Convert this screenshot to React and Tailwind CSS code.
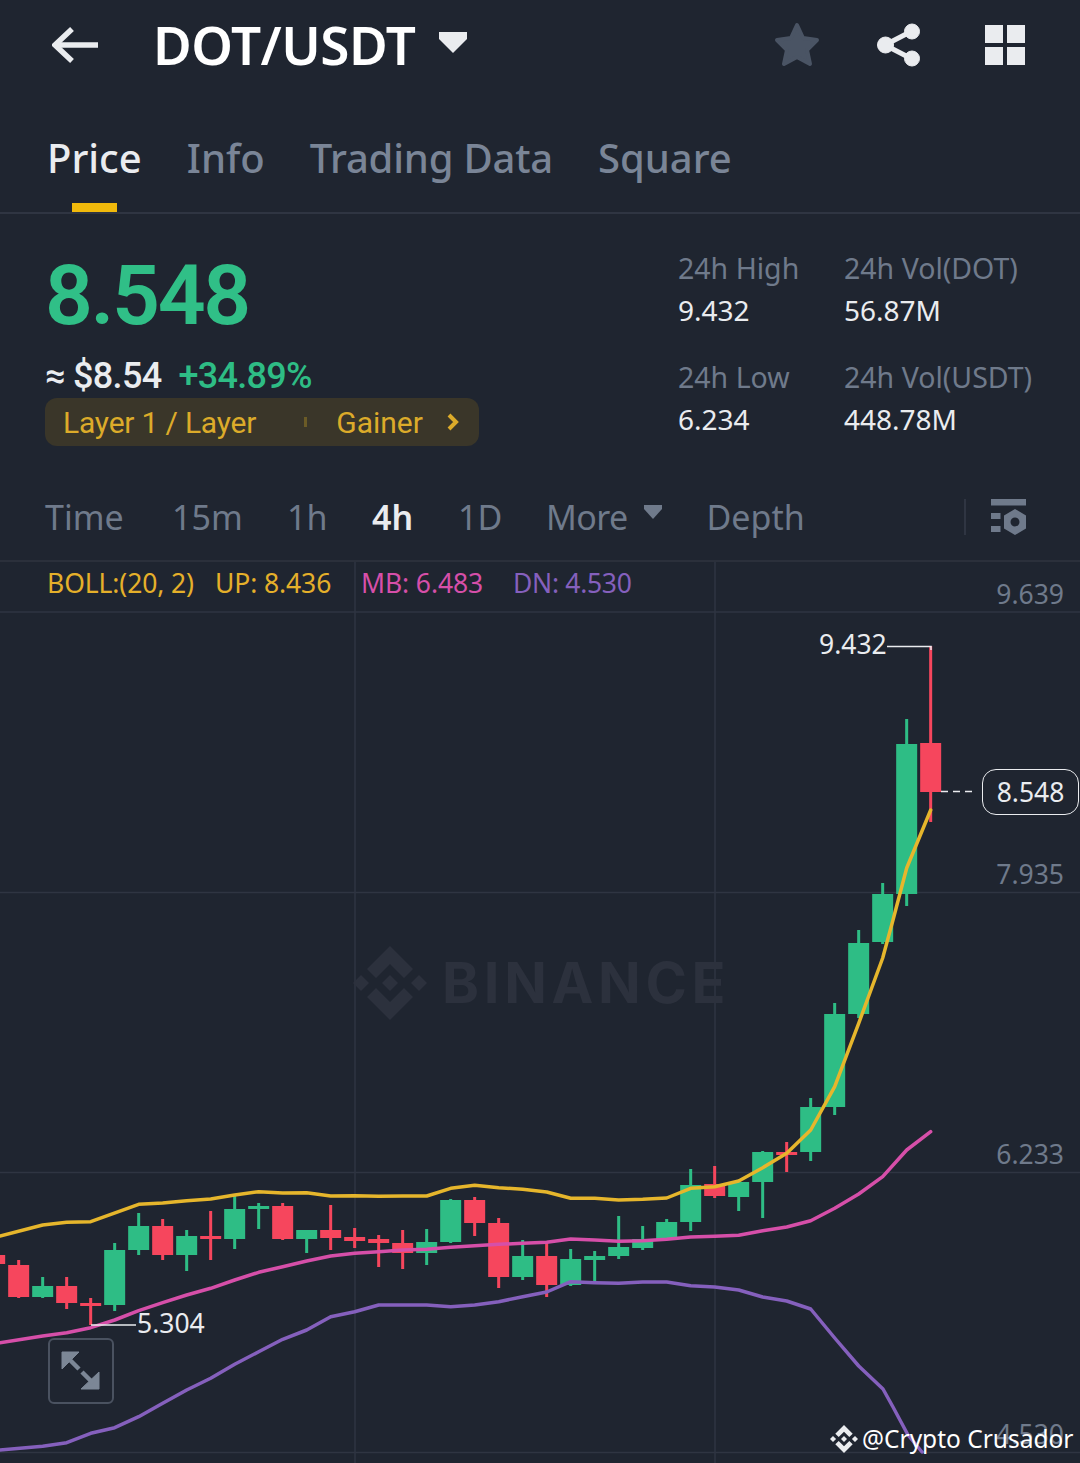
import React from "react";

const UP = "#2ebd85";
const DOWN = "#f6465d";

// [green?, wickTop, bodyTop, bodyBottom, wickBottom] every 24px, first one partly off screen
const candles = [
  [0, 1255, 1255, 1264, 1264],
  [0, 1260, 1265, 1297, 1298],
  [1, 1277, 1286, 1297, 1298],
  [0, 1277, 1286, 1303, 1309],
  [0, 1298, 1303, 1306, 1325],
  [1, 1243, 1250, 1305, 1311],
  [1, 1213, 1226, 1250, 1255],
  [0, 1219, 1226, 1255, 1260],
  [1, 1230, 1236, 1255, 1271],
  [0, 1211, 1236, 1239, 1260],
  [1, 1196, 1209, 1239, 1249],
  [1, 1203, 1206, 1209, 1229],
  [0, 1203, 1206, 1239, 1240],
  [1, 1230, 1230, 1239, 1253],
  [0, 1205, 1230, 1238, 1250],
  [0, 1228, 1237, 1241, 1248],
  [0, 1235, 1239, 1243, 1267],
  [0, 1230, 1243, 1253, 1269],
  [1, 1229, 1242, 1253, 1265],
  [1, 1199, 1200, 1242, 1243],
  [0, 1197, 1200, 1223, 1236],
  [0, 1218, 1223, 1277, 1288],
  [1, 1240, 1256, 1277, 1280],
  [0, 1243, 1256, 1285, 1297],
  [1, 1249, 1259, 1285, 1286],
  [1, 1251, 1256, 1260, 1282],
  [1, 1216, 1247, 1256, 1259],
  [1, 1226, 1239, 1248, 1250],
  [1, 1219, 1222, 1239, 1240],
  [1, 1169, 1185, 1222, 1231],
  [0, 1166, 1184, 1196, 1198],
  [1, 1182, 1182, 1197, 1211],
  [1, 1151, 1152, 1182, 1218],
  [0, 1142, 1152, 1155, 1172],
  [1, 1098, 1107, 1152, 1161],
  [1, 1003, 1014, 1107, 1115],
  [1, 930, 943, 1014, 1018],
  [1, 883, 894, 942, 944],
  [1, 719, 744, 894, 906],
  [0, 646, 743, 792, 822],
];

const yellow = "0,1236 42.7,1225 66.7,1222.3 90.7,1221.7 138.7,1204.3 162.7,1203 186.7,1200.7 210.7,1199 234.7,1195 258.7,1191.7 282.7,1193 306.7,1192.7 330.7,1196 354.7,1195.7 378.7,1196.3 402.7,1196 426.7,1196 450.7,1188.3 474.7,1185.3 498.7,1187.7 522.7,1189.3 546.7,1192 570.7,1198.3 594.7,1198.3 618.7,1200 642.7,1199.3 666.7,1198 690.7,1188.3 714.7,1186.7 738.7,1181 762.7,1167.7 786.7,1153.3 810.7,1130 834.7,1086.7 858.7,1023.3 882.7,958 893,920 906.7,868 930.7,810";
const magenta = "0,1342.7 42.7,1336 66.7,1332.7 90.7,1327.7 114.7,1320 138.7,1310.7 162.7,1302.7 186.7,1295 210.7,1288.3 234.7,1280 258.7,1272.3 282.7,1266.7 306.7,1261 330.7,1256 354.7,1253.3 378.7,1251.7 402.7,1250 426.7,1249.3 450.7,1247.3 474.7,1245.7 498.7,1244.3 522.7,1243.3 546.7,1242.3 570.7,1239 594.7,1240 618.7,1241.3 642.7,1240.7 666.7,1239.3 690.7,1237 714.7,1236.3 738.7,1235.3 762.7,1230.7 786.7,1227 810.7,1220.7 834.7,1208.3 858.7,1194 882.7,1176.7 906.7,1150 930.7,1131.7";
const purple = "0,1450 42.7,1446.3 66.7,1442.7 90.7,1433.3 114.7,1427.7 138.7,1416.7 162.7,1403.3 186.7,1390 210.7,1378.3 234.7,1364.3 258.7,1351.7 282.7,1339.3 306.7,1330 330.7,1316.7 354.7,1311.7 378.7,1305 402.7,1305 426.7,1305 450.7,1306.7 474.7,1305 498.7,1301.7 522.7,1296.7 546.7,1292 570.7,1281.7 594.7,1282.7 618.7,1283.3 642.7,1282 666.7,1282 690.7,1285.7 714.7,1287 738.7,1290 762.7,1297 786.7,1301 810.7,1309 834.7,1338 858.7,1366 883,1389 893,1407 908,1435 922,1452";

function BinanceLogo({ className, fill }) {
  return (
    <svg viewBox="-37 -37 74 74" className={className} fill={fill}>
      <polygon points="0,-37 23,-14 14,-5 0,-19 -14,-5 -23,-14" />
      <polygon points="0,37 23,14 14,5 0,19 -14,5 -23,14" />
      <polygon points="0,-8 8,0 0,8 -8,0" />
      <polygon points="-29,-8 -21,0 -29,8 -37,0" />
      <polygon points="29,-8 37,0 29,8 21,0" />
    </svg>
  );
}

function Chart() {
  return (
    <svg viewBox="0 562 1080 901" className="absolute inset-0 h-[901px] w-[1080px]">
      <g stroke="#2f3542" strokeWidth="1.5">
        <line x1="0" x2="1080" y1="612" y2="612" />
        <line x1="0" x2="1080" y1="892.5" y2="892.5" />
        <line x1="0" x2="1080" y1="1172.5" y2="1172.5" />
        <line x1="0" x2="1080" y1="1452.5" y2="1452.5" />
        <line x1="355" x2="355" y1="562" y2="1463" />
        <line x1="715" x2="715" y1="562" y2="1463" />
      </g>
      {candles.map(([green, wt, bt, bb, wb], i) => {
        const cx = -5.33 + i * 24;
        const color = green ? UP : DOWN;
        return (
          <g key={i} fill={color}>
            <rect x={cx - 1.5} y={wt} width="3" height={wb - wt} />
            <rect x={cx - 10.5} y={bt} width="21" height={bb - bt} />
          </g>
        );
      })}
      <g fill="none" strokeWidth="3.5" strokeLinejoin="round" strokeLinecap="round">
        <polyline points={purple} stroke="#8560bd" />
        <polyline points={magenta} stroke="#d64fa9" />
        <polyline points={yellow} stroke="#e6b62c" />
      </g>
      <g stroke="#eaecef" strokeWidth="1.5" fill="none">
        <polyline points="887,646.5 931,646.5 931,650" />
        <line x1="91" x2="136" y1="1325" y2="1325" />
        <line x1="941" x2="972" y1="791.5" y2="791.5" strokeDasharray="7 5" />
      </g>
    </svg>
  );
}

function HeaderIcons() {
  return (
    <div className="ml-auto flex items-center pr-[55px]">
      <svg viewBox="0 0 46 46" className="h-[46px] w-[46px]" fill="#4a5464" stroke="#4a5464" strokeWidth="4" strokeLinejoin="round">
        <polygon points="23,3 29,16 43,18 33,28 36,42 23,35 10,42 13,28 3,18 17,16" />
      </svg>
      <svg viewBox="0 0 44 46" className="ml-[57px] h-[46px] w-[44px]" fill="#eaecef" stroke="#eaecef">
        <line x1="8" y1="23" x2="35" y2="9" strokeWidth="5" />
        <line x1="8" y1="23" x2="35" y2="37" strokeWidth="5" />
        <circle cx="8.5" cy="23" r="8" />
        <circle cx="35" cy="9.5" r="7.5" />
        <circle cx="35" cy="36.5" r="7.5" />
      </svg>
      <div className="ml-[64px] grid grid-cols-[18px_18px] grid-rows-[18px_18px] gap-[4px]">
        <div className="bg-[#eaecef]" />
        <div className="bg-[#eaecef]" />
        <div className="bg-[#eaecef]" />
        <div className="bg-[#eaecef]" />
      </div>
    </div>
  );
}

function Stat({ label, value }) {
  return (
    <div>
      <div className="text-[28.5px] leading-[42px] text-[#6f7a8b]">{label}</div>
      <div className="text-[28px] leading-[42px] text-[#eaecef]">{value}</div>
    </div>
  );
}

export default function App() {
  return (
    <div className="h-[1463px] w-[1080px] overflow-hidden bg-[#1f2530] font-['Noto_Sans',sans-serif]">
      {/* Top bar */}
      <div className="flex h-[89px] items-center pl-[52px]">
        <svg viewBox="0 0 46 36" className="h-[36px] w-[46px]" fill="none" stroke="#eaecef" strokeWidth="5.5">
          <polyline points="20,2 3,18 20,34" />
          <line x1="4" y1="18" x2="46" y2="18" />
        </svg>
        <div className="ml-[55px] text-[53px] leading-none font-semibold tracking-[-0.5px] text-white">DOT/USDT</div>
        <svg viewBox="0 0 28 21" className="ml-[24px] -mt-[5px] h-[21px] w-[28px]" fill="#eaecef">
          <polygon points="0,0 28,0 28,7 14,21 0,7" />
        </svg>
        <HeaderIcons />
      </div>

      {/* Tabs */}
      <div className="flex h-[125px] gap-[45px] border-b-2 border-[#2f3542] px-[47px] text-[40px] leading-[56px] font-medium text-[#7a8597]">
        <div className="flex flex-col items-center justify-between pt-[41px] text-[#eaecef]">
          <span>Price</span>
          <span className="h-[9px] w-[45px] bg-[#f0b90b]" />
        </div>
        <div className="pt-[41px]">Info</div>
        <div className="pt-[41px] tracking-[-0.2px]">Trading Data</div>
        <div className="pt-[41px]">Square</div>
      </div>

      {/* Price block */}
      <div className="flex h-[232px]">
        <div className="w-[678px] pt-[40px] pl-[45px] font-['Roboto',sans-serif]">
          <div className="text-[84px] leading-[84px] font-semibold tracking-[-2.4px] text-[#30bf87]">8.548</div>
          <div className="mt-[16px] flex h-[44px] items-center text-[36px] tracking-[-0.7px]">
            <span className="font-medium text-[#eaecef]">≈ $8.54</span>
            <span className="ml-[17px] font-medium text-[#2ebd85]">+34.89%</span>
          </div>
          <div className="flex h-[48px] w-[434px] items-center rounded-[12px] bg-[#3a3629] pl-[18px] text-[30px] text-[#dcab2a]">
            <span className="tracking-[-0.2px]">Layer 1 / Layer</span>
            <span className="ml-[48px] h-[10px] w-[3px] bg-[#6b5b26]" />
            <span className="ml-[29px]">Gainer</span>
            <svg viewBox="0 0 12 18" className="ml-[24px] h-[18px] w-[12px]" fill="none" stroke="#dcab2a" strokeWidth="4">
              <polyline points="2,2 9,9 2,16" />
            </svg>
          </div>
        </div>
        <div className="grid grid-cols-[166px_1fr] content-start gap-y-[25px] pt-[33px]">
          <Stat label="24h High" value="9.432" />
          <Stat label="24h Vol(DOT)" value="56.87M" />
          <Stat label="24h Low" value="6.234" />
          <Stat label="24h Vol(USDT)" value="448.78M" />
        </div>
      </div>

      {/* Interval row */}
      <div className="mt-[30px] flex h-[86px] items-center border-b-2 border-[#2b303b] pb-[2px] pl-[45px] text-[34px] text-[#6f7a8b]">
        <span className="w-[127px]">Time</span>
        <span className="w-[115px]">15m</span>
        <span className="w-[85px]">1h</span>
        <span className="w-[86px] font-semibold text-[#eaecef]">4h</span>
        <span className="w-[88px]">1D</span>
        <span className="tracking-[-0.6px]">More</span>
        <svg viewBox="0 0 18 14" className="ml-[16px] -mt-[10px] h-[14px] w-[18px]" fill="#6f7a8b">
          <polygon points="0,0 18,0 18,4 9,14 0,4" />
        </svg>
        <span className="ml-[45px]">Depth</span>
        <span className="ml-auto h-[36px] w-[2px] bg-[#2f3542]" />
        <svg viewBox="0 0 36 37" className="mr-[53px] ml-[25px] h-[37px] w-[36px]" fill="#6f7a8b">
          <rect x="0" y="0" width="35" height="6.5" />
          <rect x="0" y="14" width="9.5" height="6" />
          <rect x="0" y="27" width="9.5" height="6" />
          <path fillRule="evenodd" d="M24 10 L35 16.5 L35 29.5 L24 36 L13 29.5 L13 16.5 Z M24 18.5 A4.5 4.5 0 1 0 24 27.5 A4.5 4.5 0 1 0 24 18.5 Z" />
        </svg>
      </div>

      {/* Chart */}
      <div className="relative h-[901px] text-[26.5px]">
        <Chart />

        <div className="absolute top-[3px] left-[47px] flex leading-[36px]">
          <span className="w-[168px] tracking-[-0.1px] text-[#e5b02a]">BOLL:(20, 2)</span>
          <span className="w-[146px] tracking-[-0.1px] text-[#e5b02a]">UP: 8.436</span>
          <span className="w-[152px] tracking-[-0.1px] text-[#d64fa9]">MB: 6.483</span>
          <span className="tracking-[-0.3px] text-[#8560bd]">DN: 4.530</span>
        </div>

        <span className="absolute top-[14px] right-[16px] leading-[36px] text-[#6f7a8b]">9.639</span>
        <span className="absolute top-[294px] right-[16px] leading-[36px] text-[#6f7a8b]">7.935</span>
        <span className="absolute top-[574px] right-[16px] leading-[36px] text-[#6f7a8b]">6.233</span>
        <span className="absolute top-[854px] right-[16px] leading-[36px] text-[#6f7a8b]">4.530</span>

        <span className="absolute top-[64px] left-[819px] leading-[36px] text-[#eaecef]">9.432</span>
        <span className="absolute top-[743px] left-[137px] leading-[36px] text-[#eaecef]">5.304</span>

        <div className="absolute top-[207px] left-[982px] flex h-[46px] w-[97px] items-center justify-center rounded-[14px] border border-[#eaecef] bg-[#1f2530] pt-[1px] text-[#eaecef]">
          8.548
        </div>

        <div className="absolute top-[384px] left-[353px] flex items-center">
          <BinanceLogo className="h-[74px] w-[74px]" fill="#2c313d" />
          <span className="ml-[15px] font-['Inter',sans-serif] text-[56px] leading-none font-bold tracking-[4.7px] text-[#2c313d]">BINANCE</span>
        </div>

        <div className="absolute top-[776px] left-[48px] flex h-[66px] w-[66px] items-center justify-center rounded-[6px] border-2 border-[#4a5260]">
          <svg viewBox="0 0 40 40" className="h-[40px] w-[40px]" fill="#7c8796" stroke="#7c8796">
            <polygon points="1,1 18,1 1,18" />
            <line x1="7" y1="7" x2="18" y2="18" strokeWidth="4.5" />
            <polygon points="38,38 20,38 38,21" />
            <line x1="32" y1="32" x2="21" y2="21" strokeWidth="4.5" />
          </svg>
        </div>

        <div className="absolute top-[862px] left-[830px] flex items-center whitespace-nowrap text-[24.5px] leading-[30px] text-white">
          <BinanceLogo className="h-[28px] w-[28px]" fill="#eaecef" />
          <span className="ml-[4px]">@Crypto Crusador</span>
        </div>
      </div>
    </div>
  );
}
